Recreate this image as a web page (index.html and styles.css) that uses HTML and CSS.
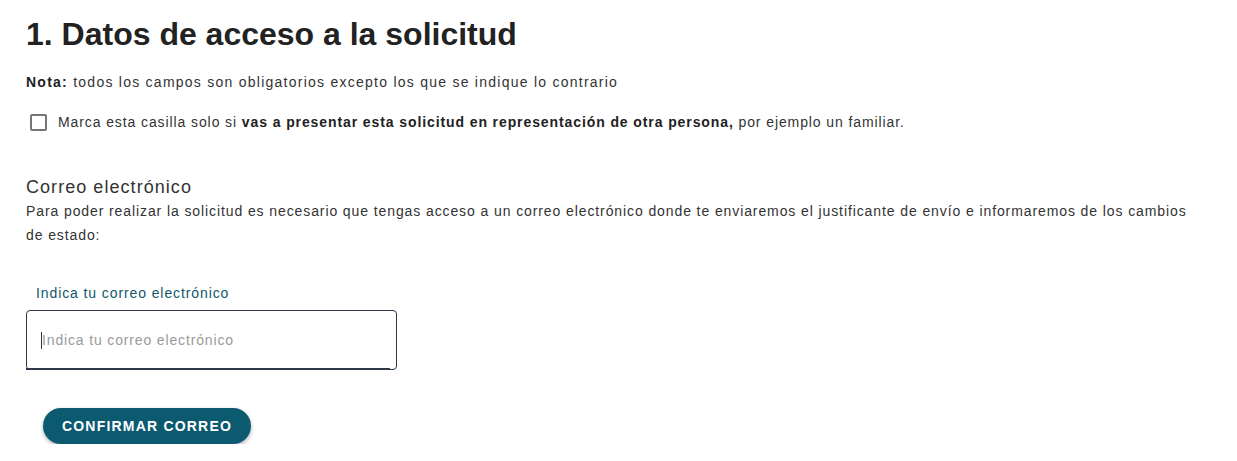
FILE: index.html
```html
<!DOCTYPE html>
<html lang="es">
<head>
<meta charset="utf-8">
<title>Datos de acceso a la solicitud</title>
<link rel="stylesheet" href="styles.css">
</head>
<body>
<main class="page">
  <h1 class="title">1. Datos de acceso a la solicitud</h1>
  <p class="note"><strong>Nota:</strong> todos los campos son obligatorios excepto los que se indique lo contrario</p>
  <label class="check">
    <span class="check-box"></span>
    <span class="check-text">Marca esta casilla solo si <strong>vas a presentar esta solicitud en representación de otra persona,</strong> por ejemplo un familiar.</span>
  </label>
  <section class="email">
    <h2 class="email-title">Correo electrónico</h2>
    <p class="email-desc">Para poder realizar la solicitud es necesario que tengas acceso a un correo electrónico donde te enviaremos el justificante de envío e informaremos de los cambios de estado:</p>
    <label class="field-label" for="email">Indica tu correo electrónico</label>
    <div class="field">
      <span class="caret"></span>
      <span class="placeholder">Indica tu correo electrónico</span>
    </div>
    <button class="btn" type="button">CONFIRMAR CORREO</button>
  </section>
</main>
</body>
</html>
```

FILE: styles.css
```css
* { box-sizing: border-box; }
html, body { margin: 0; background: #fff; }
body {
  font-family: "Liberation Sans", Arial, sans-serif;
  color: #222;
}
.page {
  padding: 14px 26px 0 26px;
  width: 1237px;
}
.title {
  margin: 0;
  font-size: 32px;
  line-height: 40px;
  font-weight: 700;
  color: #222;
}
.note {
  margin: 18px 0 0;
  font-size: 14px;
  line-height: 20px;
  letter-spacing: 1.25px;
  color: #333;
}
.note strong { color: #222; }
.check {
  display: flex;
  align-items: center;
  gap: 11px;
  margin-top: 20px;
  padding-left: 4px;
  font-size: 14px;
  line-height: 20px;
  letter-spacing: 0.9px;
  color: #333;
}
.check strong { color: #222; }
.check-box {
  width: 17px;
  height: 17px;
  border: 2px solid #767676;
  border-radius: 2px;
  flex: none;
}
.email { margin-top: 43px; }
.email-title {
  margin: 0;
  font-size: 18px;
  line-height: 24px;
  font-weight: 400;
  letter-spacing: 1.05px;
  color: #333;
}
.email-desc {
  margin: 0;
  font-size: 14px;
  line-height: 24px;
  letter-spacing: 0.9px;
  color: #333;
  max-width: 1172px;
}
.field-label {
  display: block;
  margin-top: 36px;
  padding-left: 10px;
  font-size: 14px;
  line-height: 20px;
  letter-spacing: 0.9px;
  color: #12566b;
}
.field {
  position: relative;
  display: flex;
  align-items: center;
  margin-top: 7px;
  width: 371px;
  height: 60px;
  border: 1px solid #2e3846;
  border-radius: 4px;
  padding-left: 14px;
}
.field::after {
  content: "";
  position: absolute;
  left: -1px;
  bottom: -1px;
  width: 364px;
  height: 2px;
  background: #2e3846;
}
.caret {
  width: 1px;
  height: 17px;
  background: #1f3a3a;
}
.placeholder {
  font-size: 14px;
  letter-spacing: 0.85px;
  color: #9a9a9a;
}
.btn {
  display: block;
  margin: 38px 0 0 17px;
  width: 208px;
  height: 36px;
  border: 0;
  border-radius: 18px;
  background: #0b5a70;
  color: #fff;
  font-family: "Liberation Sans", Arial, sans-serif;
  font-size: 14px;
  font-weight: 700;
  letter-spacing: 1.2px;
  box-shadow: 0 2px 4px rgba(0,0,0,0.3);
  padding: 0;
}
```
